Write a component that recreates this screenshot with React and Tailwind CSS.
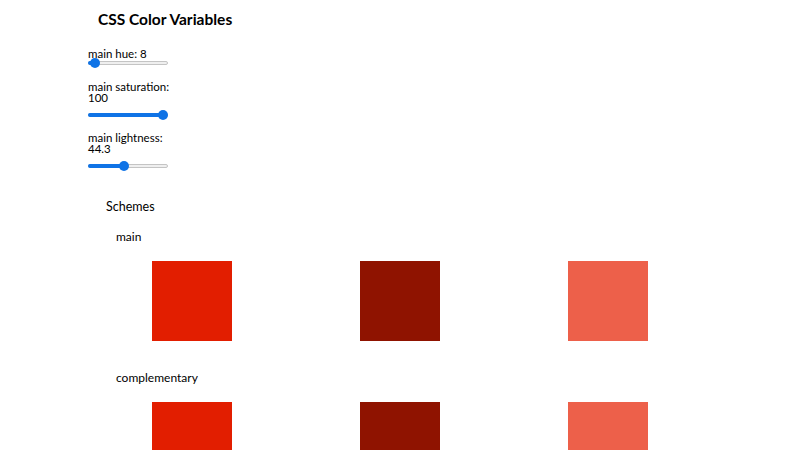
import { useState } from 'react';

// hsl -> css string helper
const hsl = (h, s, l) => `hsl(${h} ${s}% ${l}%)`;

// small range control drawn as track + fill + thumb, with a transparent native input on top
function Slider({ label, value, min, max, step, onChange, wrap }) {
  const pct = (value - min) / (max - min);
  return (
    <div className="flex flex-col w-20 text-[11.5px] leading-[11px] text-black">
      <span className="whitespace-nowrap">
        {label}:{wrap ? <br /> : ' '}{value}
      </span>
      <div className={`relative h-[10px] w-20 ${wrap ? 'mt-[7px]' : '-mt-[1px]'}`}>
        <div className="absolute left-0 right-0 top-[3px] h-[4px] rounded-full bg-[#efefef] border border-[#c4c4c4]" />
        <div
          className="absolute left-0 top-[3px] h-[4px] rounded-full bg-[#0f73e6]"
          style={{ width: `${5 + pct * 70}px` }}
        />
        <div
          className="absolute top-0 h-[10px] w-[10px] rounded-full bg-[#0f73e6]"
          style={{ left: `${pct * 70}px` }}
        />
        <input
          type="range"
          min={min}
          max={max}
          step={step}
          value={value}
          onChange={(e) => onChange(parseFloat(e.target.value))}
          className="absolute inset-0 w-full h-full opacity-0 cursor-pointer"
        />
      </div>
    </div>
  );
}

function Scheme({ name, colors }) {
  return (
    <div className="flex flex-col">
      <div className="pl-[28px] text-[12px] leading-[18px]">{name}</div>
      <div className="grid grid-cols-[208px_208px_208px] mt-[15px]">
        {colors.map((c, i) => (
          <div key={i} className="flex justify-center">
            <div className="w-20 h-20" style={{ backgroundColor: c }} />
          </div>
        ))}
      </div>
    </div>
  );
}

export default function App() {
  const [hue, setHue] = useState(8);
  const [sat, setSat] = useState(100);
  const [light, setLight] = useState(44.3);

  const main = [hsl(hue, sat, light), hsl(hue, sat, 28), hsl(hue, 82, 61)];
  const comp = [hsl(hue, sat, light), hsl(hue, sat, 28), hsl(hue, 82, 61)];

  return (
    <div className="h-screen overflow-hidden bg-white text-black font-['Lato','Open_Sans',sans-serif]">
      <div className="pl-[88px] pt-[9px]">
        <h1 className="pl-[10px] text-[15.5px] leading-[20px] font-bold">CSS Color Variables</h1>
        <div className="flex flex-col mt-[19px]">
          <Slider label="main hue" value={hue} min={0} max={360} step={1} onChange={setHue} />
          <div className="mt-[13px]">
            <Slider label="main saturation" value={sat} min={0} max={100} step={1} onChange={setSat} wrap />
          </div>
          <div className="mt-[12px]">
            <Slider label="main lightness" value={light} min={0} max={100} step={0.1} onChange={setLight} wrap />
          </div>
        </div>
        <h2 className="pl-[18px] mt-[27px] text-[12.5px] leading-[18px]">Schemes</h2>
        <div className="flex flex-col gap-[28px] mt-[12px]">
          <Scheme name="main" colors={main} />
          <Scheme name="complementary" colors={comp} />
        </div>
      </div>
    </div>
  );
}
